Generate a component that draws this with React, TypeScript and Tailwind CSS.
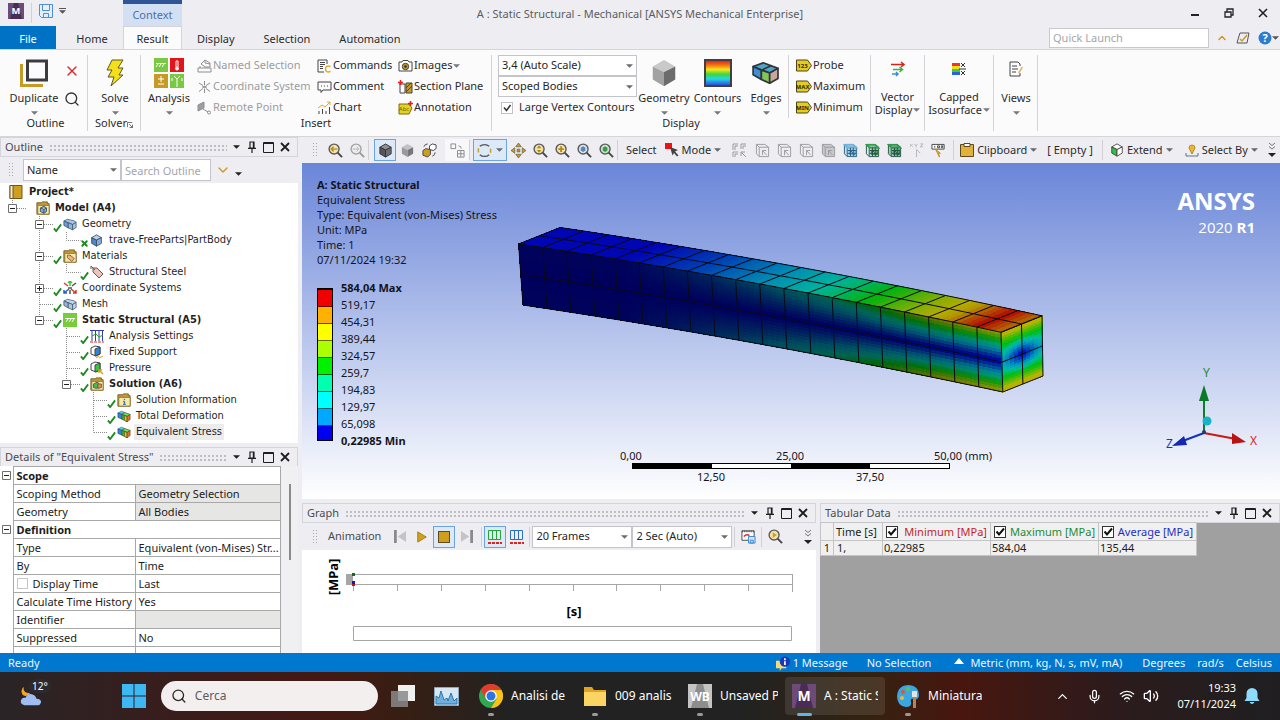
import type { ReactNode } from 'react';
import { ChevronDown, ChevronUp, Mic, Search, Volume2, Wifi, X } from 'lucide-react';

type Point = [number, number];

// ---------- shared controls ----------

function Caret({ className = 'text-[#6b6b70]' }: { className?: string }) {
  return (
    <svg viewBox="0 0 8 4" className={`h-[4px] w-[7px] shrink-0 ${className}`} fill="currentColor">
      <path d="M0 0h8L4 4z" />
    </svg>
  );
}

function Combo({ label, value, className }: { label: string; value: string; className: string }) {
  return (
    <div className={`relative shrink-0 ${className}`}>
      <select
        aria-label={label}
        className="h-full w-full appearance-none border border-[#c4c4cc] bg-white pl-[3px] text-[#262626] outline-none"
      >
        <option>{value}</option>
      </select>
      <span className="pointer-events-none absolute top-1/2 right-1 -translate-y-1/2">
        <Caret />
      </span>
    </div>
  );
}

function Grip() {
  return (
    <span className="h-4 w-[6px] shrink-0 bg-[radial-gradient(#a9a9b0_1px,transparent_1px)] bg-[length:3px_3px]" />
  );
}

function Divider() {
  return <span className="block h-5 w-px shrink-0 bg-[#d0d0d6]" />;
}

function PanelTitle({ title }: { title: string }) {
  return (
    <div className="flex h-5 shrink-0 items-center gap-[6px] border border-[#d4d4dc] bg-[#eeeef2] pr-[7px] pl-1 text-[#4a4a4f]">
      <h2 className="whitespace-nowrap">{title}</h2>
      <span className="h-[7px] flex-1 bg-[radial-gradient(#bdbdc3_1px,transparent_1px)] bg-[length:4px_4px]" />
      <button aria-label="Menu"><Caret className="text-[#1e1e1e]" /></button>
      <button aria-label="Pin" className="ml-px">
        <svg viewBox="0 0 10 12" className="h-3 w-[10px]" fill="none" stroke="#1e1e1e" strokeWidth="1.2">
          <path d="M3 1h4v6H3zM1 7.4h8M5 7.4V12M6.4 1v6" />
        </svg>
      </button>
      <button aria-label="Maximize">
        <svg viewBox="0 0 11 11" className="size-[11px]" fill="none" stroke="#1e1e1e">
          <path d="M.5.5h10v10H.5zM.5 1.5h10" />
        </svg>
      </button>
      <button aria-label="Close">
        <svg viewBox="0 0 10 10" className="size-[10px]" fill="none" stroke="#1e1e1e" strokeWidth="1.8">
          <path d="M1 1l8 8M9 1L1 9" />
        </svg>
      </button>
    </div>
  );
}

// ---------- icons ----------

function MechanicalIcon({ className, letters = 'M', fill = '#4a2b55', shade = '#6d4a78' }: { className: string; letters?: string; fill?: string; shade?: string }) {
  return (
    <svg viewBox="0 0 24 24" className={className}>
      <path fill={fill} d="M0 0h24v24H0z" />
      <path fill={shade} d="M0 0h9L3 24H0zM15 0h9v24h-3z" />
      <text x="12" y="17" textAnchor="middle" fontSize={letters.length > 1 ? 12 : 14} fontWeight="700" fill="#fff">{letters}</text>
    </svg>
  );
}

function Cube({ className = 'size-[14px]', top = '#b9d3ee', left = '#4f86c6', right = '#86aedc', stroke = '#33475c' }: { className?: string; top?: string; left?: string; right?: string; stroke?: string }) {
  return (
    <svg viewBox="0 0 16 16" className={`shrink-0 ${className}`} stroke={stroke} strokeLinejoin="round">
      <path fill={top} d="M2 4.5L8 1l6 3.5L8 7.5z" />
      <path fill={left} d="M2 4.5l6 3V15l-6-3.5z" />
      <path fill={right} d="M14 4.5l-6 3V15l6-3.5z" />
    </svg>
  );
}

function Bodies({ colors = ['#a9c6e6', '#6f9bd0', '#8fb5de'] }: { colors?: string[] }) {
  return (
    <svg viewBox="0 0 16 14" className="h-[13px] w-[14px] shrink-0" stroke="#2f4a66" strokeWidth=".8" strokeLinejoin="round">
      <path fill={colors[0]} d="M1 3l4-2 4 1 3 .5 3 2-4 2.5-5-2z" />
      <path fill={colors[1]} d="M1 3l5 2v6L1 8z" />
      <path fill={colors[2]} d="M6 5l5 2v6l-5-2z" />
      <path fill={colors[0]} d="M15 4.5l-4 2.5v6l4-2.5z" />
    </svg>
  );
}

// Two shaded cubes side by side, used by every contour result.
function ContourBodies() {
  return (
    <svg viewBox="0 0 16 14" className="h-[13px] w-[14px] shrink-0" stroke="#3a3a2c" strokeWidth=".6" strokeLinejoin="round">
      <path fill="#5fd0ee" d="M1 3l4-2 4 1.5-3.5 2z" />
      <path fill="#2f86dc" d="M1 3l4.5 1.5V10L1 8z" />
      <path fill="#6ede5e" d="M5.5 4.5L9 2.5l6 2L11.5 7z" />
      <path fill="#3fae3c" d="M5.5 4.5l6 2.5v6l-6-3z" />
      <path fill="#f2c21c" d="M8.5 6l3 1v6l-3-1.5z" />
      <path fill="#ee6a1c" d="M15 4.5L11.500 7v6l3.500-2.500z" />
    </svg>
  );
}

function Folder({ children }: { children?: ReactNode }) {
  return (
    <svg viewBox="0 0 16 16" className="size-[14px] shrink-0">
      <path fill="#c39a35" stroke="#6b5a2a" d="M1 2h5l1-1h6v2h2v12H1z" />
      <path fill="#f7e9a8" stroke="#8a7434" d="M2 5h13v10H2z" />
      {children}
    </svg>
  );
}

function TagIcon({ text }: { text: string }) {
  return (
    <svg viewBox="0 0 16 12" className="h-[13px] w-4 shrink-0">
      <path fill="#e6cc1d" stroke="#4b4420" d="M.5.5h11l4 5.5-4 5.5H.5z" />
      <text x="6.5" y="8.3" fontSize="6" fontWeight="700" textAnchor="middle" fill="#2c2808">{text}</text>
    </svg>
  );
}

function Magnifier({ lens = '#f2e3b0', children }: { lens?: string; children?: ReactNode }) {
  return (
    <svg viewBox="0 0 16 16" className="size-[15px]" fill="none">
      <circle cx="6.5" cy="6.5" r="5.300" fill={lens} stroke="#5a5a5a" strokeWidth="1.500" />
      <path d="M10.300 10.300L15 15" stroke="#444" strokeWidth="2" />
      {children}
    </svg>
  );
}

function SelectFilter({ stroke = '#9a9a9f', fill = 'none', accent }: { stroke?: string; fill?: string; accent?: string }) {
  return (
    <svg viewBox="0 0 16 16" className="size-[15px]" fill="none" stroke={stroke}>
      <path fill={fill} d="M1.5 1.5h9l4 3v10h-10l-3-3z" />
      <path d="M1.5 1.5l3 3h10M4.5 4.5v10" />
      {accent && <path stroke={accent} strokeWidth="2" d="M2 2h9l3 3H5zM7 8h6v4H7z" />}
      {accent && <path stroke={stroke} d="M8 5v9M11 5v9M5 8h9M5 11h9" />}
      <path d="M8 8v5M8 8h4M8 8l4.5 5" />
    </svg>
  );
}

function CheckMark() {
  return (
    <svg viewBox="0 0 10 10" className="size-full" fill="none" stroke="#1d8a22" strokeWidth="2">
      <path d="M1 6l2.5 3L9 1.5" />
    </svg>
  );
}

// ---------- ribbon ----------

function BigButton({ icon, label, second, width }: { icon: ReactNode; label: string; second?: string; width: string }) {
  return (
    <button className={`flex h-[64px] shrink-0 flex-col items-center whitespace-nowrap ${width}`}>
      <span className="flex h-[36px] items-center justify-center">{icon}</span>
      {second ? (
        <>
          <span className="leading-[12px]">{label}</span>
          <span className="flex items-center gap-px leading-[13px]">{second}<Caret className="w-[6px] text-[#77777c]" /></span>
        </>
      ) : (
        <>
          <span className="leading-[14px]">{label}</span>
          <span className="mt-1 flex h-2 items-center"><Caret className="w-[6px] text-[#77777c]" /></span>
        </>
      )}
    </button>
  );
}

function RibbonGroup({ label, children, className = '' }: { label: ReactNode; children: ReactNode; className?: string }) {
  return (
    <section className={`my-[5px] flex shrink-0 flex-col border-r border-[#d4d4d8] ${className}`}>
      <div className="flex h-[61px] items-start">{children}</div>
      <p className="flex h-[14px] items-center justify-center leading-[14px]">{label}</p>
    </section>
  );
}

function SmallButton({ icon, label, muted, caret }: { icon: ReactNode; label: string; muted?: boolean; caret?: boolean }) {
  return (
    <button disabled={muted} className={`flex h-[21px] items-center gap-px whitespace-nowrap ${muted ? 'text-[#9b9b9f]' : 'text-[#2b2b2b]'}`}>
      {icon}
      <span>{label}</span>
      {caret && <Caret className="w-[6px] text-[#77777c]" />}
    </button>
  );
}

function Ribbon() {
  return (
    <div className="flex h-[88px] shrink-0 overflow-hidden border-y border-[#d4d4da] bg-[#fbfbfc] text-[#2b2b2b]">
      <RibbonGroup label="Outline" className="w-[88px] pl-1">
        <BigButton
          width="w-[60px]"
          label="Duplicate"
          icon={
            <svg viewBox="0 0 28 28" className="size-7" fill="none">
              <path d="M1.5 5v21.5H23" stroke="#c69a26" strokeWidth="3" />
              <path d="M7.5 2h19v19h-19z" stroke="#3c3c40" strokeWidth="3" />
            </svg>
          }
        />
        <div className="flex flex-col items-center gap-3 pt-[8px]">
          <button aria-label="Delete"><X className="size-4 text-[#e02828]" /></button>
          <button aria-label="Find"><Search className="size-4 text-[#333]" /></button>
        </div>
      </RibbonGroup>

      <RibbonGroup
        label={
          <>
            Solver
            <svg viewBox="0 0 7 7" className="mt-1 size-[6px]" fill="none" stroke="#555"><path d="M.5 6V.5H6M2.5 2.5l4 4M6.5 3v3.5H3" /></svg>
          </>
        }
        className="w-[53px]"
      >
        <BigButton
          width="w-[54px]"
          label="Solve"
          icon={
            <svg viewBox="0 0 18 28" className="h-7 w-[18px]">
              <path d="M6 1h11l-5 8h5l-4 7h4L5 27l3-9H2l4-7H1z" fill="#f5df1b" stroke="#5d5720" strokeLinejoin="round" />
            </svg>
          }
        />
      </RibbonGroup>

      <RibbonGroup label="Insert" className="w-[351px]">
        <BigButton
          width="w-[56px]"
          label="Analysis"
          icon={
            <svg viewBox="0 0 30 30" className="size-[30px]" fill="none" stroke="#fff">
              <path fill="#7ac943" stroke="none" d="M0 0h14v14H0zM16 16h14v14H16z" />
              <path fill="#e2161a" stroke="none" d="M16 0h14v14H16z" />
              <path fill="#c69a26" stroke="none" d="M0 16h14v14H0z" />
              <path d="M2 5.5h10M4 6l-2 3M7 6L5 9M10 6L8 9M22 9V3h2v6M4 21h6M7 18v6M4 26h6M23 29v-8M20 18l3 3 3-3M18 20v3M28 20v3" />
              <circle cx="23" cy="10.5" r="1.5" fill="#fff" />
            </svg>
          }
        />
        <div className="flex w-[120px] flex-col">
          <SmallButton muted label="Named Selection" icon={
            <svg viewBox="0 0 15 14" className="h-[14px] w-[15px] shrink-0" fill="none" stroke="#8e8e92"><path d="M4 5l4-4 5 3v4H8L4 5zM8 1v3l5 1M1 9h13v4H1zM3 7v2" /></svg>
          } />
          <SmallButton muted label="Coordinate System" icon={
            <svg viewBox="0 0 15 14" className="h-[14px] w-[15px] shrink-0" fill="none" stroke="#8e8e92"><path d="M7.5 1v4M7.5 9v4M2 3l4 2.5M9 8.5l4 3M13 3L9 5.5M6 8.5l-4 3M5 7h5" /><circle cx="7.5" cy="7" r="1" /></svg>
          } />
          <SmallButton muted label="Remote Point" icon={
            <svg viewBox="0 0 15 14" className="h-[14px] w-[15px] shrink-0" fill="none" stroke="#8e8e92"><path fill="#9e9ea2" d="M1 4l6-3v6L1 10z" /><path d="M6 8l5 3" /><circle cx="12" cy="11.5" r="1.5" /></svg>
          } />
        </div>
        <div className="flex w-[81px] flex-col">
          <SmallButton label="Commands" icon={
            <svg viewBox="0 0 15 14" className="h-[14px] w-[15px] shrink-0" fill="none" stroke="#444"><path d="M10 5V1H1v12h6M3 3.5h5M3 5.5h5M3 7.5h3M3 9.5h3" /><path stroke="#dcae1e" strokeWidth="1.5" d="M13.5 7.5q-5-1.5-5 2.5t5 2.5" /></svg>
          } />
          <SmallButton label="Comment" icon={
            <svg viewBox="0 0 15 14" className="h-[14px] w-[15px] shrink-0" fill="none" stroke="#444"><path d="M1 2h13v8H6l-2 2.5V10H1z" /><path strokeDasharray="1 2" d="M4 6h8" /></svg>
          } />
          <SmallButton label="Chart" icon={
            <svg viewBox="0 0 15 14" className="h-[14px] w-[15px] shrink-0" fill="none" stroke="#444"><path d="M2 13v-3M5.5 13V8M9 13v-3M12.5 13V6" /><path stroke="#dcae1e" d="M1 7l4-3 3 2 5-5M10 1h3v3" /></svg>
          } />
        </div>
        <div className="flex flex-col">
          <SmallButton caret label="Images" icon={
            <svg viewBox="0 0 15 14" className="h-[14px] w-[15px] shrink-0" fill="#fff" stroke="#444"><path d="M1 3h3l1-1.5h5L11 3h3v9H1z" /><circle cx="7.5" cy="7.5" r="3.2" fill="#c69a26" /><circle cx="7.5" cy="7.5" r="1" fill="#333" /></svg>
          } />
          <SmallButton label="Section Plane" icon={
            <svg viewBox="0 0 15 14" className="h-[14px] w-[15px] shrink-0" fill="none" stroke="#444"><path d="M1 4h6v9H2V4" /><path fill="#c69a26" d="M8 3h6v10H8z" /><path d="M8 8l5-5M8 12l6-6" /><path stroke="#e02020" strokeWidth="1.5" d="M0 2.5h5M2.5 0v5" /></svg>
          } />
          <SmallButton label="Annotation" icon={
            <svg viewBox="0 0 15 14" className="h-[14px] w-[15px] shrink-0"><path fill="#e9d01f" stroke="#7a6c12" d="M1 3h10l3 4-3 6H1z" /><text x="6" y="10" fontSize="6" textAnchor="middle" fill="#6b5e10">Abc</text><path stroke="#e02020" strokeWidth="1.5" d="M10 2.5h5M12.5 0v5" /></svg>
          } />
        </div>
      </RibbonGroup>

      <RibbonGroup label="Display" className="w-[379px]">
        <div className="flex flex-col pl-[6px]">
          <Combo label="Scale" value="3,4 (Auto Scale)" className="h-[21px] w-[139px]" />
          <Combo label="Bodies" value="Scoped Bodies" className="h-[21px] w-[139px]" />
          <label className="flex h-[21px] items-center gap-[6px] pl-[3px] whitespace-nowrap">
            <span className="relative flex size-3">
              <input type="checkbox" defaultChecked className="peer size-3 appearance-none border border-[#c0c0c6] bg-white" />
              <svg viewBox="0 0 12 12" className="pointer-events-none absolute inset-0 hidden size-3 peer-checked:block" fill="none" stroke="#333" strokeWidth="1.5"><path d="M3 5.5l2.5 3L9.5 3" /></svg>
            </span>
            Large Vertex Contours
          </label>
        </div>
        <BigButton width="w-[54px]" label="Geometry" icon={<Cube className="size-[30px]" top="#c9c9c9" left="#a2a2a2" right="#6c6c6c" stroke="none" />} />
        <BigButton
          width="w-[53px]"
          label="Contours"
          icon={<span className="h-[28px] w-[28px] border-2 border-[#3f3f44] bg-[linear-gradient(#e8251c,#f07a10_18%,#f4e61a_36%,#3fd63a_55%,#25d5e6_75%,#2a4fe0)]" />}
        />
        <BigButton
          width="w-[44px]"
          label="Edges"
          icon={
            <svg viewBox="0 0 30 26" className="h-[24px] w-[28px]" stroke="#30343c" strokeWidth="1.8" strokeLinejoin="round">
              <path fill="#4fa5c4" d="M1 6l11-4 16 6-9 5z" />
              <path fill="#3d8fd2" d="M1 6l9 4v10l-9-5z" />
              <path fill="#7fc857" d="M10 10l9 3v11l-9-4z" />
              <path fill="#c9a79a" d="M28 8l-9 5v11l9-5z" />
              <path fill="none" d="M10 10l11-5" />
            </svg>
          }
        />
        <div className="flex h-[63px] flex-col border-l border-[#d4d4d8] pl-[7px]">
          <SmallButton label="Probe" icon={<TagIcon text="123" />} />
          <SmallButton label="Maximum" icon={<TagIcon text="MAX" />} />
          <SmallButton label="Minimum" icon={<TagIcon text="MIN" />} />
        </div>
      </RibbonGroup>

      <RibbonGroup label="" className="w-[54px]">
        <BigButton width="w-[53px]" label="Vector" second="Display" icon={
          <svg viewBox="0 0 16 16" className="-mt-2 size-4" fill="none" strokeWidth="1.5"><path stroke="#d8201c" d="M1 3.5h13M11 1l3 2.5L11 6" /><path stroke="#35b83a" d="M3 8.5h9M9.5 6l3 2.5-3 2.5" /><path stroke="#3d8be0" d="M2 13h6M6 11l2 2-2 2" /></svg>
        } />
      </RibbonGroup>
      <RibbonGroup label="" className="w-[69px]">
        <BigButton width="w-[68px]" label="Capped" second="Isosurface" icon={
          <svg viewBox="0 0 16 16" className="-mt-2 size-4">
            <path fill="#e33" d="M1 2h8v3H1z" /><path fill="#f4dc1a" d="M1 5h8v3H1z" /><path fill="#3ccf3c" d="M1 8h8v3H1z" /><path fill="#2b62e0" d="M1 11h8v3H1z" />
            <path fill="none" stroke="#333" d="M10 2l4 4M14 2l-4 4M10 10l4 4M14 10l-4 4M8 8h7" />
          </svg>
        } />
      </RibbonGroup>
      <RibbonGroup label="" className="w-[44px]">
        <BigButton width="w-[44px]" label="Views" icon={
          <svg viewBox="0 0 16 16" className="-mt-2 size-4" fill="none" stroke="#444"><path d="M12 5V3l-2-2H2v14h10v-3M4 5h5M4 8h6M4 11h4" /><path stroke="#d9b770" strokeWidth="1.5" d="M14.5 6l-4 6" /></svg>
        } />
      </RibbonGroup>
    </div>
  );
}

function TitleArea() {
  const tabs = ['Display', 'Selection', 'Automation'];
  return (
    <header className="shrink-0 bg-[#eeeef2]">
      <div className="grid h-[26px] grid-cols-[1fr_auto_1fr] text-[#5c5c61]">
        <div className="flex items-center">
          <MechanicalIcon className="mb-1 ml-2 size-4" />
          <span className="mx-[7px] h-5 w-px bg-[#d2d2d6]" />
          <button aria-label="Save" className="mb-1">
            <svg viewBox="0 0 14 14" className="size-[14px]" fill="#e3eefb" stroke="#4f8fd6"><path d="M.5.5h13v13h-11l-2-2zM3.5.5v6h7v-6M4.5 13.5v-4h5v4" /></svg>
          </button>
          <button aria-label="Customize toolbar" className="mb-1 ml-[6px] border-t border-[#555] pt-px"><Caret className="text-[#555]" /></button>
          <span className="ml-[57px] h-[26px] w-[59px] border-t-4 border-[#2f5597] bg-[#d3e0f4] pt-[3px] text-center leading-4 text-[#4b6fa8]">Context</span>
        </div>
        <h1 className="pt-[6px] leading-4">A : Static Structural - Mechanical [ANSYS Mechanical Enterprise]</h1>
        <div className="flex items-center justify-end gap-6 pr-3 text-[#222]">
          <button aria-label="Minimize"><svg viewBox="0 0 10 10" className="size-[10px]" stroke="currentColor" strokeWidth="2"><path d="M1 7h8" /></svg></button>
          <button aria-label="Restore"><svg viewBox="0 0 10 10" className="size-[10px]" fill="none" stroke="currentColor" strokeWidth="1.3"><path d="M1 4h6v5H1zM3 4V1h6v6H7" /></svg></button>
          <button aria-label="Close window"><svg viewBox="0 0 10 10" className="size-[10px]" stroke="currentColor" strokeWidth="1.6"><path d="M1 1l8 8M9 1L1 9" /></svg></button>
        </div>
      </div>
      <nav className="flex h-[23px] leading-[25px] text-[#2b2b2b]">
        <button className="w-14 bg-[#0072c6] text-white">File</button>
        <button className="w-[67px] pl-[5px]">Home</button>
        <button className="w-[59px] border-x border-t border-[#d4d4da] bg-[#fbfbfc] leading-[24px]">Result</button>
        {tabs.map((tab) => (
          <button key={tab} className="pr-[14px] pl-[15px]">{tab}</button>
        ))}
        <div className="ml-auto flex items-center gap-[7px] pr-px">
          <input aria-label="Quick Launch" placeholder="Quick Launch" className="h-5 w-[160px] border border-[#c8c8d0] bg-white px-[3px] outline-none placeholder:text-[#a5a5aa]" />
          <ChevronUp className="size-3 text-[#c69a26]" strokeWidth={3} />
          <svg viewBox="0 0 16 14" className="h-[14px] w-4" fill="none" stroke="#555"><path d="M5 2h9l-2 10H2L4 5z" /><path stroke="#c69a26" strokeWidth="1.5" d="M5 8l2 2 5-6" /></svg>
          <span className="flex items-center">
            <svg viewBox="0 0 14 14" className="size-[14px]"><circle cx="7" cy="7" r="6.5" fill="#2c7bd0" /><text x="7" y="11" fontSize="11" fontWeight="700" textAnchor="middle" fill="#fff">?</text></svg>
            <Caret className="w-[5px] text-[#555]" />
          </span>
        </div>
      </nav>
    </header>
  );
}

// ---------- outline tree ----------

interface TreeNode {
  level: 1 | 2 | 3 | 4;
  label: string;
  icon: ReactNode;
  expander?: '-' | '+';
  status?: 'ok' | 'x';
  bold?: boolean;
  selected?: boolean;
}

const tree: TreeNode[] = [
  { level: 1, label: 'Model (A4)', bold: true, expander: '-', icon: <Folder><path fill="#7fb0e0" stroke="#2f4a66" d="M5 8l4-2 3 2v4l-3 2-4-2zM5 8l4 1.5 3-1.5M9 9.5V14" /></Folder> },
  { level: 2, label: 'Geometry', expander: '-', status: 'ok', icon: <Bodies /> },
  { level: 3, label: 'trave-FreeParts|PartBody', status: 'x', icon: <Cube className="mr-px size-[13px]" /> },
  { level: 2, label: 'Materials', expander: '-', status: 'ok', icon: <Folder><path fill="#e6b98a" stroke="#8a5a2a" d="M5 7h3l5 4-3 3-5-4z" /></Folder> },
  { level: 3, label: 'Structural Steel', status: 'ok', icon: (
    <svg viewBox="0 0 14 14" className="size-[14px] shrink-0" stroke="#6c5552"><path fill="#edc4bb" d="M3 3h4l6 6-4 4-6-6z" /><path fill="none" d="M5 5L1 1v3" /></svg>
  ) },
  { level: 2, label: 'Coordinate Systems', expander: '+', status: 'ok', icon: (
    <svg viewBox="0 0 14 14" className="size-[14px] shrink-0" fill="none" strokeWidth="1.5"><path stroke="#39c83b" d="M7 0v5M5 2l2-2 2 2" /><path stroke="#d93a30" d="M8 8l5 4M13 9v3h-3M1 2l4 3" /><path stroke="#2d5fd0" d="M6 8l-5 4M1 9v3h3" /><path stroke="#555" d="M13 2L9 5M5 7h4M7 9v4" /></svg>
  ) },
  { level: 2, label: 'Mesh', status: 'ok', icon: <Bodies colors={['#c4d5e6', '#9ab4cf', '#b0c6dc']} /> },
  { level: 2, label: 'Static Structural (A5)', bold: true, expander: '-', status: 'ok', icon: (
    <svg viewBox="0 0 14 14" className="size-[14px] shrink-0"><path fill="#78cc3a" d="M0 0h14v14H0z" /><path stroke="#fff" fill="none" d="M2 5.5h10M5 6L3 9M8 6L6 9M11 6L9 9" /></svg>
  ) },
  { level: 3, label: 'Analysis Settings', status: 'ok', icon: (
    <svg viewBox="0 0 14 14" className="size-[14px] shrink-0" fill="none"><path stroke="#3b3ba8" d="M2 1v11M5.5 1v11M9 1v11M12.5 1v11M0 1.5h14" /><path stroke="#2aa03a" d="M2 7l4-2 3 3 4-2" /><path stroke="#d02a2a" d="M0 13h14" strokeDasharray="3 1" /></svg>
  ) },
  { level: 3, label: 'Fixed Support', status: 'ok', icon: (
    <svg viewBox="0 0 14 14" className="size-[14px] shrink-0" stroke="#444" fill="#fff"><path d="M1 3l4-2 5 1v7l-4 2-5-2z" /><path fill="#2f86dc" d="M5 4l5-2v7l-5 2z" /><path stroke="#d8a020" d="M6 13l3-2M9 13l4-2" /></svg>
  ) },
  { level: 3, label: 'Pressure', status: 'ok', icon: (
    <svg viewBox="0 0 14 14" className="size-[14px] shrink-0" stroke="#444" fill="#fff"><path d="M1 3l4-2 5 1v7l-4 2-5-2z" /><path fill="#38c440" d="M5 4l5-2v7l-5 2z" /><path stroke="#d8a020" strokeWidth="1.5" d="M9 9l4 4M9 12V9h3" /></svg>
  ) },
  { level: 3, label: 'Solution (A6)', bold: true, expander: '-', status: 'ok', icon: <Folder><path fill="#46b85a" stroke="#555" d="M4 8l4-2 2 1v5l-3 1-3-1z" /><path fill="#f09a2c" stroke="#555" d="M9 8l4 0v4l-4 1z" /></Folder> },
  { level: 4, label: 'Solution Information', status: 'ok', icon: <Folder><path stroke="#3a78c8" strokeWidth="1.5" d="M8.5 6.5v1.5M8.5 9v4.5M7 9.5h1.5M7 13h3" fill="none" /></Folder> },
  { level: 4, label: 'Total Deformation', status: 'ok', icon: <ContourBodies /> },
  { level: 4, label: 'Equivalent Stress', status: 'ok', selected: true, icon: <ContourBodies /> },
];

const indent = { 1: 'pl-[8px]', 2: 'pl-[35px]', 3: 'pl-[62px]', 4: 'pl-[89px]' };

function Expander({ sign }: { sign: '-' | '+' }) {
  return (
    <svg viewBox="0 0 9 9" className="size-[9px] shrink-0" fill="#fff" stroke="#6e6e6e">
      <path d="M.5.5h8v8h-8z" />
      <path stroke="#222" d={sign === '-' ? 'M2 4.5h5' : 'M2 4.5h5M4.5 2v5'} />
    </svg>
  );
}

function OutlineTree() {
  return (
    <div className="relative bg-white pt-px pb-[3px] font-['DejaVu_Sans_Condensed','Noto_Sans',sans-serif] text-[#1f1f1f]">
      <svg viewBox="0 0 140 256" className="pointer-events-none absolute top-px left-0 h-[256px] w-[140px]" fill="none" stroke="#8a8a8a" strokeDasharray="1 1">
        <path d="M12.5 16v8M17 24.5h10M39.5 32v104M44 40.5h9M44 72.5h9M44 104.5h9M40 120.5h13M44 136.5h9" />
        <path d="M66.5 48v8.5h14M66.5 80v8.5h14M66.5 144v56M67 152.5h14M67 168.5h14M67 184.5h14M71 200.5h10" />
        <path d="M93.5 208v40.5M94 216.5h14M94 232.5h14M94 248.5h14" />
      </svg>
      <ul className="relative">
        <li className="flex h-4 items-center gap-[6px] pl-[9px]">
          <svg viewBox="0 0 14 14" className="size-[14px]" stroke="#6e5718"><path fill="#cf9e1e" d="M1 .5h12v13H1z" /><path fill="#f5edd0" d="M1 .5h3v13H1z" /></svg>
          <span className="leading-[18px] font-bold">Project*</span>
        </li>
        {tree.map((node) => (
          <li key={node.label} className={`flex h-4 items-center whitespace-nowrap ${indent[node.level]}`}>
            <span className="mr-[9px] flex size-[9px] shrink-0">{node.expander && <Expander sign={node.expander} />}</span>
            <span className="mt-[6px] mr-px flex size-[9px] shrink-0">
              {node.status === 'ok' && <CheckMark />}
              {node.status === 'x' && <X className="size-[9px] text-[#1d8a22]" strokeWidth={5} />}
            </span>
            {node.icon}
            <span className={`ml-[3px] px-[2px] leading-4 ${node.bold ? 'font-bold' : ''} ${node.selected ? 'bg-[#ececec]' : ''}`}>{node.label}</span>
          </li>
        ))}
      </ul>
    </div>
  );
}

// ---------- details ----------

interface DetailRow {
  name: string;
  value?: string;
  header?: boolean;
  readOnly?: boolean;
  checkbox?: boolean;
}

const details: DetailRow[] = [
  { name: 'Scope', header: true },
  { name: 'Scoping Method', value: 'Geometry Selection', readOnly: true },
  { name: 'Geometry', value: 'All Bodies', readOnly: true },
  { name: 'Definition', header: true },
  { name: 'Type', value: 'Equivalent (von-Mises) Str...' },
  { name: 'By', value: 'Time' },
  { name: 'Display Time', value: 'Last', checkbox: true },
  { name: 'Calculate Time History', value: 'Yes' },
  { name: 'Identifier', value: '', readOnly: true },
  { name: 'Suppressed', value: 'No' },
];

function DetailsPanel() {
  return (
    <section className="mt-1 flex min-h-0 flex-1 flex-col">
      <PanelTitle title={'Details of "Equivalent Stress"'} />
      <div className="-mt-px flex min-h-0 flex-1 overflow-hidden bg-white">
        <table className="w-[281px] table-fixed border-collapse self-start text-[#1c1c1c]">
          <colgroup>
            <col className="w-[13px]" />
            <col className="w-[122px]" />
            <col />
          </colgroup>
          <tbody>
            {details.map((row) =>
              row.header ? (
                <tr key={row.name} className="h-[18px]">
                  <td className="p-0"><span className="flex justify-center"><Expander sign="-" /></span></td>
                  <th colSpan={2} className="border border-[#a8a8a8] px-[3px] py-0 text-left leading-[17px] font-bold">{row.name}</th>
                </tr>
              ) : (
                <tr key={row.name} className="h-[18px]">
                  <td className="p-0" />
                  <td className="border border-[#a8a8a8] px-[3px] py-0 leading-[17px] whitespace-nowrap">
                    {row.checkbox ? (
                      <label className="flex items-center gap-[5px]">
                        <input type="checkbox" className="size-[11px] appearance-none border border-[#c6c6c6] bg-white" />
                        {row.name}
                      </label>
                    ) : (
                      row.name
                    )}
                  </td>
                  <td className={`border border-[#a8a8a8] px-[3px] py-0 leading-[17px] whitespace-nowrap ${row.readOnly ? 'bg-[#e6e6e4]' : ''}`}>{row.value}</td>
                </tr>
              ),
            )}
            <tr className="h-[6px]">
              <td />
              <td className="border-x border-[#a8a8a8]" />
              <td className="border-x border-[#a8a8a8]" />
            </tr>
          </tbody>
        </table>
        <div className="flex-1 bg-[#f0f0f2] pt-[18px]">
          <div className="mx-auto h-[76px] w-[2px] bg-[#8b8b8b]" />
        </div>
      </div>
    </section>
  );
}

// ---------- graphics view ----------

const COLUMNS = 20;

// Edges of the bent bar, each a shallow parabola along its length.
const frontTop = (t: number): Point => [518.6 + 482.4 * t, 243.5 + 71.8 * t + 16.5 * t * t];
const frontBottom = (t: number): Point => [523 + 479.8 * t, 304.5 + 71.2 * t + 15.8 * t * t];
const backTop = (t: number): Point => [560 + 482 * t, 227 + 71.6 * t + 16.7 * t * t];
const endFrontTop = frontTop(1);
const endBackTop = backTop(1);

const mix = (a: Point, b: Point, v: number): Point => [a[0] + (b[0] - a[0]) * v, a[1] + (b[1] - a[1]) * v];
const side = (t: number, v: number) => mix(frontTop(t), frontBottom(t), v);
const top = (t: number, v: number) => mix(backTop(t), frontTop(t), v);
const end = (t: number, v: number) => mix(mix(endFrontTop, endBackTop, t), mix(frontBottom(1), [1043, 375.5], t), v);

function interpolate(stops: number[][], x: number) {
  for (let i = 1; i < stops.length; i++) {
    if (x <= stops[i][0]) {
      const f = (x - stops[i - 1][0]) / (stops[i][0] - stops[i - 1][0]);
      return stops[i].slice(1).map((value, k) => stops[i - 1][k + 1] + (value - stops[i - 1][k + 1]) * f);
    }
  }
  return stops[stops.length - 1].slice(1);
}

const palette = [[0, 0, 0, 255], [0.22, 0, 200, 255], [0.34, 0, 255, 225], [0.5, 0, 255, 20], [0.75, 255, 245, 0], [0.88, 255, 120, 0], [1, 255, 0, 0]];
const stressAlong = [[0, 0.01], [0.22, 0.01], [0.36, 0.1], [0.5, 0.22], [0.6, 0.34], [0.66, 0.42], [0.72, 0.52], [0.8, 0.68], [0.88, 0.78], [0.95, 0.99], [1, 0.84]];

function shade(stress: number, light: number) {
  const rgb = interpolate(palette, Math.min(1, Math.max(0, stress)));
  return `rgb(${rgb.map((c) => Math.round(c * light)).join(',')})`;
}

function Patches({ at, color, nt, nv }: { at: (t: number, v: number) => Point; color: (t: number, v: number) => string; nt: number; nv: number }) {
  const cells = [];
  for (let i = 0; i < nt; i++) {
    for (let j = 0; j < nv; j++) {
      const points = [at(i / nt, j / nv), at((i + 1) / nt, j / nv), at((i + 1) / nt, (j + 1) / nv), at(i / nt, (j + 1) / nv)];
      const fill = color((i + 0.5) / nt, (j + 0.5) / nv);
      cells.push(<polygon key={`${i}-${j}`} points={points.join(' ')} fill={fill} stroke={fill} strokeWidth="1" />);
    }
  }
  return <g shapeRendering="crispEdges">{cells}</g>;
}

function Beam() {
  const steps = Array.from({ length: COLUMNS + 1 }, (_, i) => i / COLUMNS);
  const line = (points: Point[]) => `M${points.map((p) => p.join(' ')).join('L')}`;
  const mesh = [
    ...steps.map((t) => line([backTop(t), frontTop(t), frontBottom(t)])),
    ...[0, 0.5, 1].map((v) => line(steps.map((t) => side(t, v)))),
    ...[0, 0.5].map((v) => line(steps.map((t) => top(t, v)))),
    ...[0, 0.5, 1].map((v) => line([end(0, v), end(1, v)])),
    ...[0.5, 1].map((t) => line([end(t, 0), end(t, 1)])),
  ].join('');
  return (
    <svg viewBox="302 163 978 335" className="absolute inset-0 h-full w-full" role="img" aria-label="Equivalent stress on the beam">
      <Patches at={top} nt={80} nv={1} color={(t) => shade(interpolate(stressAlong, t)[0], 0.7)} />
      <Patches
        at={side}
        nt={80}
        nv={20}
        color={(t, v) => {
          const fromAxis = Math.abs(2 * v - 1) ** 1.2;
          return shade(Math.min(0.78, interpolate(stressAlong, t)[0]) * fromAxis * 0.98, 0.36 + 0.26 * t ** 6);
        }}
      />
      <Patches
        at={end}
        nt={10}
        nv={24}
        color={(t, v) => {
          const fromAxis = Math.abs(2 * v - 1);
          const fromCentre = Math.hypot(fromAxis, (2 * t - 1) * 0.6);
          return shade(Math.min(0.76, 0.56 * fromAxis ** 1.6 + 0.28 * Math.min(1, fromCentre * 1.6)), 0.74);
        }}
      />
      <path d={mesh} fill="none" stroke="#0a0a14" strokeWidth="1" />
    </svg>
  );
}

const legend = [
  { label: '584,04 Max', color: 'bg-[#f00000]' },
  { label: '519,17', color: 'bg-[#ffb000]' },
  { label: '454,31', color: 'bg-[#ffff00]' },
  { label: '389,44', color: 'bg-[#aaff00]' },
  { label: '324,57', color: 'bg-[#00f000]' },
  { label: '259,7', color: 'bg-[#00ffb0]' },
  { label: '194,83', color: 'bg-[#00ffff]' },
  { label: '129,97', color: 'bg-[#00a8ff]' },
  { label: '65,098', color: 'bg-[#0000f0]' },
];

function GraphicsView() {
  return (
    <div className="relative min-h-[335px] flex-1 overflow-hidden bg-[linear-gradient(#6a86d8,#ffffff)] text-[#14141c]">
      <Beam />
      <div className="relative pt-[14px] pl-[15px] leading-[15px]">
        <p className="font-bold">A: Static Structural</p>
        <p>Equivalent Stress</p>
        <p>Type: Equivalent (von-Mises) Stress</p>
        <p>Unit: MPa</p>
        <p>Time: 1</p>
        <p>07/11/2024 19:32</p>
        <div className="mt-[21px] flex gap-2">
          <div className="flex w-4 flex-col self-start border border-t-2 border-black">
            {legend.map((band) => (
              <span key={band.label} className={`h-[17px] border-b border-black/60 last:h-[14px] last:border-0 ${band.color}`} />
            ))}
          </div>
          <ul className="-mt-[9px] leading-[17px]">
            {legend.map((band, i) => (
              <li key={band.label} className={i === 0 ? 'font-bold' : ''}>{band.label}</li>
            ))}
            <li className="font-bold">0,22985 Min</li>
          </ul>
        </div>
      </div>

      <div className="absolute top-[21px] right-[25px] text-right font-['Open_Sans','Noto_Sans',sans-serif] text-white">
        <p className="text-[24px] leading-[33px] font-bold">ANSYS</p>
        <p className="text-[15px] leading-[20px]">2020 <b>R1</b></p>
      </div>

      <div className="absolute bottom-[15px] left-[318px] w-[376px] leading-[15px]">
        <div className="flex">
          <span className="w-[145px]">0,00</span>
          <span className="w-[159px] pl-[11px]">25,00</span>
          <span className="flex-1 pl-[10px] whitespace-nowrap">50,00 (mm)</span>
        </div>
        <div className="ml-3 flex h-[6px] w-[318px] border border-black bg-white">
          <span className="w-1/4 bg-black" />
          <span className="w-1/4" />
          <span className="w-1/4 bg-black" />
        </div>
        <div className="flex">
          <span className="w-[159px] pl-[77px]">12,50</span>
          <span className="pl-[77px]">37,50</span>
        </div>
      </div>

      <svg viewBox="0 -8 96 94" className="absolute right-[20px] bottom-[46px] h-[94px] w-[96px]" role="img" aria-label="Axis triad">
        <g strokeWidth="2">
          <path stroke="#0f7d2a" d="M40 66V30" /><path fill="#0b7a26" d="M35 34l5-16 5 16z" />
          <path stroke="#c81a12" d="M40 66l32 6" /><path fill="#b81414" d="M68 66l14 9-14 2z" />
          <path stroke="#1530c0" d="M40 66l-24 9" /><path fill="#1028b4" d="M20 69L8 79l15-1z" />
        </g>
        <circle cx="43" cy="54" r="4.5" fill="#19b3c8" />
        <circle cx="40" cy="65" r="2" fill="#1e3c78" />
        <text x="39" y="10" fontSize="12" fill="#1c8a3a">Y</text>
        <text x="86" y="78" fontSize="12" fill="#d8241c">X</text>
        <text x="2" y="81" fontSize="12" fill="#1c32d0">Z</text>
      </svg>
    </div>
  );
}

function Tool({ label, children, active, width = 'w-[22px]' }: { label: string; children: ReactNode; active?: boolean; width?: string }) {
  return (
    <button aria-label={label} className={`flex h-[22px] shrink-0 items-center justify-center gap-1 border ${width} ${active ? 'border-[#6ba4e4] bg-[#dbe9f8]' : 'border-transparent'}`}>
      {children}
    </button>
  );
}

function ViewToolbar() {
  return (
    <div className="flex h-[26px] shrink-0 items-center overflow-hidden bg-[#eeeef2] pl-[10px] text-[#2b2b2b]">
      <Grip />
      <span className="w-[6px] shrink-0" />
      <Tool label="Previous view"><Magnifier><path stroke="#b98a12" strokeWidth="1.5" d="M10 6.5H4M6 4L3.5 6.5 6 9" /></Magnifier></Tool>
      <Tool label="Next view"><span className="opacity-50"><Magnifier lens="#eee"><path stroke="#777" d="M3 6.5h6M7 4l2.5 2.5L7 9" /></Magnifier></span></Tool>
      <Divider />
      <span className="w-[5px] shrink-0" />
      <Tool active label="Shaded exterior and edges"><Cube className="size-[15px]" top="#8d8d92" left="#55555a" right="#6c6c72" stroke="#333" /></Tool>
      <Tool label="Shaded exterior"><Cube className="size-[15px]" top="#c2c2c4" left="#9a9a9d" right="#77777b" stroke="none" /></Tool>
      <Tool label="Wireframe">
        <svg viewBox="0 0 16 16" className="size-[15px]" fill="#fff" stroke="#444"><path d="M8 3l3-2 4 1v4l-3 2-4-1z" /><path fill="#cf9e1e" d="M1 8l3-2 5 1v5l-3 3-5-2z" /><path fill="none" d="M2 4q1-3 4-3M14 10q0 3-3 4" /></svg>
      </Tool>
      <span className="w-[5px] shrink-0" />
      <Tool width="w-[24px] bg-[#f8f8fa]" label="Explode"><svg viewBox="0 0 16 16" className="size-[15px]" fill="none" stroke="#88888c"><path d="M1 1h5v5H1zM8 8h7v7H8zM11.5 8v7M8 11.5h7M9 3q3 0 3 3" /></svg></Tool>
      <Divider />
      <span className="w-[3px] shrink-0" />
      <Tool active label="Rotate" width="w-[34px]">
        <svg viewBox="0 0 16 16" className="size-[15px]" fill="none" strokeWidth="1.5"><path stroke="#555" d="M3 3.5a7 6 0 0 1 10 0M13 12.5a7 6 0 0 1-10 0" /><path stroke="#c69a26" d="M1.5 10v-4.500M14.500 10.500v-4.500" /></svg>
        <Caret />
      </Tool>
      <Tool label="Pan"><svg viewBox="0 0 16 16" className="size-[15px]" fill="#c69a26" stroke="#555" strokeWidth=".7"><path d="M8 0l3 4H5zM8 16l3-4H5zM0 8l4-3v6zM16 8l-4-3v6z" /><path d="M6.5 6.5h3v3h-3z" /></svg></Tool>
      <Tool label="Zoom"><Magnifier><path fill="#b98a12" d="M6.5 2.5L9 5.5H4zM6.5 10.5L9 7.5H4z" /></Magnifier></Tool>
      <Tool label="Box zoom"><Magnifier><path stroke="#b98a12" strokeWidth="2" d="M3.5 6.5h6M6.5 3.5v6" /></Magnifier></Tool>
      <Tool label="Zoom to fit"><Magnifier lens="#d4e2f2"><path fill="#5d86b8" d="M4 5l2.5-1.5L9 5v3L6.5 9.5 4 8z" /></Magnifier></Tool>
      <Tool label="Zoom to selection"><Magnifier lens="#c8e6cc"><path fill="#3a9a48" d="M4 5l2.5-1.5L9 5v3L6.5 9.5 4 8z" /></Magnifier></Tool>
      <Divider />
      <span className="mx-2">Select</span>
      <button className="flex shrink-0 items-center gap-[3px]">
        <svg viewBox="0 0 14 14" className="size-[14px]"><path fill="#ee1111" d="M0 0h7v6H0z" /><path fill="#444" d="M5 4l8 3-3 1.5 3.5 4-1.5 1L9 10l-1.5 2.5z" /></svg>
        Mode
        <Caret className="w-[6px] text-[#66666b]" />
      </button>
      <span className="w-2 shrink-0" />
      <Tool label="Select filter"><svg viewBox="0 0 16 16" className="size-4" fill="none" stroke="#9a9a9f"><path d="M1 8V2h5M3 8V4h3M9 7V2h5M11 7V4h3M1 15v-5h5M3 15v-3h3M9 10l5 5M9 10v4M9 10h4" /></svg></Tool>
      <Tool label="Vertex"><SelectFilter /></Tool>
      <Tool label="Edge"><SelectFilter /></Tool>
      <Tool label="Face"><SelectFilter /></Tool>
      <Tool label="Body"><SelectFilter fill="#c9c9cc" /></Tool>
      <Tool label="Node"><SelectFilter stroke="#2f5f80" fill="#bfe0f2" accent="#6fb3dd" /></Tool>
      <Tool label="Element face"><SelectFilter stroke="#2c4f4a" fill="#d8ecf4" accent="#2fa044" /></Tool>
      <Tool label="Element"><SelectFilter stroke="#2c4f4a" fill="#9ed3b0" accent="#2f9a4e" /></Tool>
      <Tool label="Coordinate"><svg viewBox="0 0 16 16" className="size-[15px]" fill="none" stroke="#b5b5b9"><path d="M1 1l3 3M4 1L1 4M6 1l1.5 2L9 1M7.5 3v1.5M12 1h3l-3 3h3M8 7v8M8 7l4 4" /></svg></Tool>
      <Tool label="Probe label"><svg viewBox="0 0 16 16" className="size-[15px]" fill="#fff" stroke="#444"><path d="M1 1.5h13v5H1zM4 3v2M7 3h2v2H7zM11 3h1.5v2H11z" /><path fill="#e3b32a" stroke="#c08d18" d="M5 7l5 4H8l1 4z" /></svg></Tool>
      <span className="w-1 shrink-0" />
      <Divider />
      <button className="ml-[6px] flex shrink-0 items-center gap-[3px]">
        <svg viewBox="0 0 14 14" className="size-[14px]" stroke="#5b4a1c"><path fill="#e2b13c" d="M.5 1.5h13v12H.5z" /><path fill="#fff" d="M4 .5h6v3H4z" /></svg>
        Clipboard
        <Caret className="w-[6px] text-[#66666b]" />
      </button>
      <span className="mr-[9px] ml-[10px] shrink-0">[ Empty ]</span>
      <Divider />
      <button className="ml-[7px] flex shrink-0 items-center gap-[3px]">
        <Cube top="#fff" left="#2fc23c" right="#fff" stroke="#444" />
        Extend
        <Caret className="w-[6px] text-[#66666b]" />
      </button>
      <button className="ml-3 flex shrink-0 items-center gap-[3px]">
        <svg viewBox="0 0 14 14" className="size-[14px]" fill="none" stroke="#5b7486"><path d="M1 10v3h12v-3" /><path fill="#e6b93a" stroke="#b98a12" d="M7 11L4 5a3 3 0 1 1 6 0z" /></svg>
        Select By
        <Caret className="w-[6px] text-[#66666b]" />
      </button>
      <Overflow />
    </div>
  );
}

function Overflow() {
  return (
    <button aria-label="More" className="mr-1 ml-auto">
      <svg viewBox="0 0 8 16" className="h-4 w-2" fill="none" stroke="#777"><path d="M1 1l3 2.5L7 1M1 4.5L4 7l3-2.5" /><path fill="#222" stroke="none" d="M0 11h8l-4 4z" /></svg>
    </button>
  );
}

// ---------- graph and table ----------

function GraphPanel() {
  const ticks = Array.from({ length: 11 }, (_, i) => 51 + i * 43.9);
  return (
    <section className="flex w-[514px] shrink-0 flex-col bg-white">
      <PanelTitle title="Graph" />
      <div className="flex h-[27px] shrink-0 items-center bg-[#eeeef2] pl-[10px] text-[#2b2b2b]">
        <Grip />
        <span className="mr-2 ml-[10px] text-[#4a4a4f]">Animation</span>
        <Tool label="First frame"><svg viewBox="0 0 14 14" className="size-[13px]"><path fill="#8a8a8d" d="M0 0h3v14H0z" /><path fill="#c4c4c6" d="M13 1v12L4 7z" /></svg></Tool>
        <Tool label="Play"><svg viewBox="0 0 14 14" className="size-[12px]"><path fill="#d39f18" stroke="#9b7a24" d="M2 1l10 6-10 6z" /></svg></Tool>
        <Tool active label="Stop"><span className="size-3 border border-[#5e4d1b] bg-[#cf9e1e]" /></Tool>
        <Tool label="Last frame"><svg viewBox="0 0 14 14" className="size-[13px]"><path fill="#8a8a8d" d="M11 0h3v14h-3z" /><path fill="#c4c4c6" d="M1 1v12l9-6z" /></svg></Tool>
        <span className="mr-[2px] ml-1"><Divider /></span>
        <Tool active label="Distributed"><svg viewBox="0 0 14 14" className="size-[14px]" fill="none" stroke="#25a634"><path d="M.5.5h12v9H.5zM4.5.5v9M8.5.5v9" /><path stroke="#d22" d="M0 13h14" strokeDasharray="3 1" strokeWidth="2" /></svg></Tool>
        <Tool label="Result sets"><svg viewBox="0 0 14 14" className="size-[14px]" fill="none" stroke="#2c6fbf"><path d="M.5.5h12v9H.5zM4.5.5v9M8.5.5v9" /><path stroke="#d22" d="M0 13h14" strokeDasharray="3 1" strokeWidth="2" /></svg></Tool>
        <span className="mr-[2px] ml-px"><Divider /></span>
        <Combo label="Frames" value="20 Frames" className="h-[22px] w-[100px]" />
        <Combo label="Duration" value="2 Sec (Auto)" className="h-[22px] w-[100px]" />
        <span className="mx-[2px]"><Divider /></span>
        <Tool label="Export video"><svg viewBox="0 0 16 16" className="size-[15px]" fill="#fff" stroke="#444"><path d="M1 2h13v10H1z" /><path strokeDasharray="1 1" strokeWidth="2" d="M1 2.5h13" /><path fill="none" stroke="#d22" strokeWidth="1.5" d="M3 8q3-3 6-1" /><path fill="#cfe2f7" stroke="#3d86d0" d="M8 8h7v7H8zM10 12h3v3h-3z" /></svg></Tool>
        <span className="mx-[2px]"><Divider /></span>
        <Tool label="Zoom to playback"><Magnifier><path fill="#d39f18" d="M5 3.5l4.5 3-4.5 3z" /></Magnifier></Tool>
        <Overflow />
      </div>
      <svg viewBox="0 0 514 103" className="w-full flex-1" preserveAspectRatio="xMinYMin meet" fill="none" stroke="#a6a6a6" role="img" aria-label="Result history">
        <path d={`M51 24.5h439.5M51 34.5h439.5M490.5 24v18${ticks.map((x) => `M${Math.round(x) + 0.5} 34v7`).join('')}`} />
        <path fill="#fff" d="M51.5 76.5h438v14h-438z" />
        <path fill="#a6a6a6" stroke="none" d="M44 24h7v11h-7z" />
        <path fill="#186a1c" stroke="none" d="M50 23h3v3h-3z" />
        <path fill="#1616c0" stroke="none" d="M50 31h3v3h-3z" />
        <path fill="#c01616" stroke="none" d="M50 34h3v2h-3z" />
        <g fill="#000" stroke="none" fontSize="13" fontWeight="700" textAnchor="middle">
          <text transform="translate(36 27) rotate(-90)">[MPa]</text>
          <text x="272" y="66">[s]</text>
        </g>
      </svg>
    </section>
  );
}

const series = [
  { label: 'Minimum [MPa]', value: '0,22985', color: 'text-[#c41e2a]' },
  { label: 'Maximum [MPa]', value: '584,04', color: 'text-[#1f8a35]' },
  { label: 'Average [MPa]', value: '135,44', color: 'text-[#1c2fc4]' },
];

function TabularPanel() {
  return (
    <section className="flex min-w-0 flex-1 flex-col bg-[#a0a0a0]">
      <PanelTitle title="Tabular Data" />
      <table className="-mt-px table-fixed border-collapse self-start bg-[#f0f0f0] whitespace-nowrap text-[#1c1c1c]">
        <thead>
          <tr className="h-[18px] leading-[17px]">
            <th className="w-[13px] border border-[#c4c4c4]" />
            <th className="w-[49px] border border-[#c4c4c4] px-[2px] text-left font-normal">Time [s]</th>
            {series.map((s) => (
              <th key={s.label} className={`border border-[#c4c4c4] px-[3px] text-left font-normal ${s.color} ${s.label.startsWith('Average') ? 'w-[98px]' : 'w-[108px]'}`}>
                <label className="flex items-center justify-between">
                  <span className="relative flex size-3">
                    <input type="checkbox" defaultChecked className="peer size-3 appearance-none border border-[#333] bg-white" />
                    <svg viewBox="0 0 12 12" className="pointer-events-none absolute inset-0 hidden size-3 peer-checked:block" fill="none" stroke="#111" strokeWidth="2"><path d="M2.5 5.5l2.5 3 5-6" /></svg>
                  </span>
                  {s.label}
                </label>
              </th>
            ))}
          </tr>
        </thead>
        <tbody>
          <tr className="h-[15px] leading-[14px]">
            <th className="border border-[#c4c4c4] font-normal">1</th>
            <td className="border border-[#c4c4c4] px-[3px]">1,</td>
            {series.map((s) => (
              <td key={s.label} className="border border-[#c4c4c4] px-[1px]">{s.value}</td>
            ))}
          </tr>
        </tbody>
      </table>
    </section>
  );
}

// ---------- status bar and taskbar ----------

function StatusBar() {
  return (
    <footer className="flex h-[19px] shrink-0 items-center bg-[#0078d0] px-2 pt-px whitespace-nowrap text-[#eef6fd]">
      <span className="mr-auto">Ready</span>
      <svg viewBox="0 0 16 16" className="mr-[2px] size-[15px]"><path fill="#f1dc7a" d="M0 5h11v8H6l-2 3v-3H0z" /><circle cx="9.5" cy="6" r="5.5" fill="#1b37b8" /><path stroke="#fff" strokeWidth="1.8" d="M9.5 2.5v2M9.5 5.5v4" /></svg>
      <span className="mr-[19px]">1 Message</span>
      <span className="mr-[23px]">No Selection</span>
      <svg viewBox="0 0 10 6" className="mr-[6px] mb-1 h-[6px] w-[10px]" fill="#fff"><path d="M5 0l5 6H0z" /></svg>
      <span className="mr-[20px]">Metric (mm, kg, N, s, mV, mA)</span>
      <span className="mr-3">Degrees</span>
      <span className="mr-3">rad/s</span>
      <span>Celsius</span>
    </footer>
  );
}

function TaskButton({ icon, label, active, width }: { icon: ReactNode; label: string; active?: boolean; width: string }) {
  return (
    <button className={`relative flex h-[38px] shrink-0 items-center gap-2 rounded px-[7px] text-left ${width} ${active ? 'bg-white/10' : ''}`}>
      {icon}
      <span className="overflow-hidden whitespace-nowrap">{label}</span>
      <span className={`absolute bottom-[-1px] h-[3px] rounded-full ${active ? 'left-3 w-[15px] bg-[#5db6ee]' : 'left-4 w-[6px] bg-[#9a9a9a]'}`} />
    </button>
  );
}

function Taskbar() {
  return (
    <nav className="flex h-12 shrink-0 items-center overflow-hidden bg-[linear-gradient(90deg,#2a2426,#451814_25%,#381e12_31%,#222222_40%,#222222_58%,#35220f_68%,#48160f_75%,#2c1b1c_87%,#1f1f21)] text-[12px] text-white">
      <div className="relative ml-4 h-[30px] w-[106px] shrink-0">
        <svg viewBox="0 0 24 24" className="absolute top-1 left-1 size-[22px]"><path fill="#f5a623" d="M4 2q-1 7 7 7-3 5-8 2-3-5 1-9z" /><path fill="#9fbdf2" d="M5 22q-5-1-4-5 1-4 5-3 2-5 7-4 4 1 5 5 5 0 5 4-1 3-4 3z" /></svg>
        <span className="absolute -top-[2px] left-[13px] rounded-full bg-[#2b2b2e] px-[3px] text-[10px] leading-[14px]">12°</span>
      </div>
      <button aria-label="Start" className="shrink-0">
        <svg viewBox="0 0 24 24" className="size-6" fill="#3cb8f5"><path d="M0 0h11.5v11.5H0zM12.5 0H24v11.5H12.5zM0 12.5h11.5V24H0zM12.5 12.5H24V24H12.5z" /></svg>
      </button>
      <label className="ml-[15px] flex h-[30px] w-[217px] shrink-0 items-center gap-2 rounded-full bg-[#f3efef] px-[10px] text-[#2a2a2a]">
        <Search className="size-[18px]" />
        <input aria-label="Cerca" placeholder="Cerca" className="w-full bg-transparent outline-none placeholder:text-[#5f5a5a]" />
      </label>
      <button aria-label="Task view" className="ml-[13px] shrink-0">
        <svg viewBox="0 0 25 24" className="h-6 w-[25px]"><path fill="#f0f0f0" d="M7 1h17v16H7z" /><path fill="#8a8a8a" fillOpacity=".85" d="M0 7h17v16H0z" /></svg>
      </button>
      <button aria-label="Monitor" className="mr-[13px] ml-[18px] shrink-0">
        <svg viewBox="0 0 25 19" className="h-[19px] w-[25px]"><path fill="#d7e8f4" stroke="#8fa9bb" d="M.5.5h24v18H.5z" /><path fill="#6fb0dc" stroke="#2a78b5" d="M2 17V9l3 2 2-7 3 9 3-2 1 3 3-8 3 8 3-3v6z" /></svg>
      </button>
      <TaskButton width="w-[104px]" label="Analisi de" icon={
        <svg viewBox="0 0 24 24" className="size-6 shrink-0"><circle cx="12" cy="12" r="12" fill="#2fa84f" /><path fill="#e33b2e" d="M1.6 6A12 12 0 0 1 22.4 6H12z" /><path fill="#e33b2e" d="M1.6 6L7 15l5-9z" /><path fill="#fbc116" d="M22.4 6A12 12 0 0 1 12 24l5.5-9L12 6z" /><circle cx="12" cy="12" r="5.8" fill="#fff" /><circle cx="12" cy="12" r="4.5" fill="#2f74e6" /></svg>
      } />
      <TaskButton width="w-[105px]" label="009 analis" icon={
        <svg viewBox="0 0 24 22" className="h-[22px] w-6 shrink-0"><path fill="#e0a32a" d="M1 2h8l2 3h12v5H1z" /><path fill="#fbd464" d="M1 7h22v14H1z" /></svg>
      } />
      <TaskButton width="w-[104px]" label="Unsaved P" icon={<MechanicalIcon className="size-6 shrink-0" letters="WB" fill="#8d8d8d" shade="#c4c4c4" />} />
      <TaskButton active width="w-[100px]" label="A : Static S" icon={<MechanicalIcon className="size-6 shrink-0" />} />
      <TaskButton width="w-[101px] ml-1" label="Miniatura" icon={
        <svg viewBox="0 0 24 24" className="size-6 shrink-0"><path fill="#3aa7e0" d="M13 1q10 1 10 10 0 5-5 4-4-1-3 3 1 5-5 5Q1 22 1 12 2 1 13 1z" /><circle cx="7" cy="8" r="2" fill="#e6503c" /><circle cx="12" cy="5" r="2" fill="#5cc45a" /><circle cx="6" cy="14" r="2" fill="#f2b632" /><path fill="#b98350" d="M17 9h3v15h-3z" /><path fill="#e4e4e4" d="M16 7h5v6h-5z" /></svg>
      } />
      <div className="ml-auto flex items-center">
        <ChevronUp className="mr-[17px] size-[15px]" />
        <Mic className="mr-[17px] size-[15px]" />
        <Wifi className="mr-2 size-4" />
        <Volume2 className="mr-[18px] size-4" />
        <div className="mr-2 text-right text-[11px] leading-[16px]">
          <p>19:33</p>
          <p>07/11/2024</p>
        </div>
        <svg viewBox="0 0 16 18" className="mr-5 h-[18px] w-4" fill="#8fdcfa"><path d="M8 1a5.5 5.5 0 0 1 5.5 5.5V11l2 3H.5l2-3V6.5A5.5 5.5 0 0 1 8 1zM5.5 15h5q-2.5 4-5 0z" /></svg>
      </div>
    </nav>
  );
}

export default function App() {
  return (
    <div className="flex min-h-screen flex-col bg-[#eeeef2] font-['Noto_Sans','Open_Sans',sans-serif] text-[11px]">
      <TitleArea />
      <Ribbon />
      <main className="flex flex-1">
        <aside className="flex w-[298px] shrink-0 flex-col">
          <PanelTitle title="Outline" />
          <div className="flex h-[26px] shrink-0 items-center pl-2">
            <Grip />
            <span className="w-[9px]" />
            <Combo label="Filter by" value="Name" className="h-[22px] w-[98px]" />
            <input aria-label="Search Outline" placeholder="Search Outline" className="h-[22px] w-[90px] border border-[#c4c4cc] bg-white px-[3px] outline-none placeholder:text-[#a5a5aa]" />
            <ChevronDown className="ml-1 size-4 text-[#c69a26]" />
            <span className="mt-2 ml-1"><Caret className="w-[6px] text-[#222]" /></span>
          </div>
          <OutlineTree />
          <DetailsPanel />
        </aside>
        <div className="ml-1 flex min-w-0 flex-1 flex-col">
          <ViewToolbar />
          <GraphicsView />
          <div className="mt-1 flex min-h-[150px] gap-1">
            <GraphPanel />
            <TabularPanel />
          </div>
        </div>
      </main>
      <StatusBar />
      <Taskbar />
    </div>
  );
}
